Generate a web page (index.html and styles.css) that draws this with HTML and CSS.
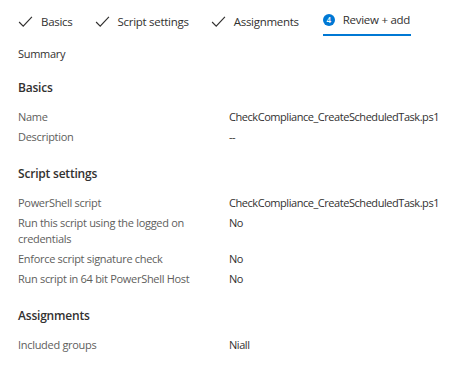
FILE: index.html
```html
<!DOCTYPE html>
<html lang="en">
<head>
  <meta charset="UTF-8" />
  <title>Review + add</title>
  <link rel="stylesheet" href="styles.css">
</head>
<body>
  <div class="wizard">
    <!-- Steps -->
    <div class="steps">
      <div class="step done">
        <svg class="check" viewBox="0 0 16 12" width="15" height="11"><path d="M1 6.5 L5.5 11 L15 1" fill="none" stroke="#323130" stroke-width="1.3"/></svg>
        <span>Basics</span>
      </div>
      <div class="step done">
        <svg class="check" viewBox="0 0 16 12" width="15" height="11"><path d="M1 6.5 L5.5 11 L15 1" fill="none" stroke="#323130" stroke-width="1.3"/></svg>
        <span>Script settings</span>
      </div>
      <div class="step done">
        <svg class="check" viewBox="0 0 16 12" width="15" height="11"><path d="M1 6.5 L5.5 11 L15 1" fill="none" stroke="#323130" stroke-width="1.3"/></svg>
        <span>Assignments</span>
      </div>
      <div class="step active">
        <span class="num">4</span>
        <span>Review + add</span>
      </div>
    </div>

    <div class="summary">Summary</div>

    <!-- Basics -->
    <h3>Basics</h3>
    <div class="row"><div class="label">Name</div><div class="value">CheckCompliance_CreateScheduledTask.ps1</div></div>
    <div class="row"><div class="label">Description</div><div class="value">--</div></div>

    <!-- Script settings -->
    <h3>Script settings</h3>
    <div class="row"><div class="label">PowerShell script</div><div class="value">CheckCompliance_CreateScheduledTask.ps1</div></div>
    <div class="row"><div class="label">Run this script using the logged on credentials</div><div class="value">No</div></div>
    <div class="row"><div class="label">Enforce script signature check</div><div class="value">No</div></div>
    <div class="row"><div class="label">Run script in 64 bit PowerShell Host</div><div class="value">No</div></div>

    <!-- Assignments -->
    <h3>Assignments</h3>
    <div class="row"><div class="label">Included groups</div><div class="value">Niall</div></div>
  </div>
</body>
</html>
```

FILE: styles.css
```css
body {
  margin: 0;
  background: #ffffff;
  font-family: 'Open Sans', sans-serif;
  font-size: 11px;
  letter-spacing: -0.3px;
  color: #323130;
}
.wizard {
  padding: 0 0 0 18px;
}
.steps {
  display: flex;
  height: 36px;
  gap: 22px;
}
.step {
  display: flex;
  align-items: center;
  gap: 8px;
  font-size: 11.5px;
  letter-spacing: -0.28px;
  box-sizing: border-box;
  padding-top: 7px;
}
.step.active {
  border-bottom: 2px solid #0078d4;
  padding: 5px 1px 0 0;
  margin-left: 2px;
}
.check {
  display: block;
}
.num {
  width: 12px;
  height: 12px;
  border-radius: 50%;
  background: #0078d4;
  color: #fff;
  font-size: 8px;
  font-weight: 600;
  letter-spacing: 0;
  display: flex;
  align-items: center;
  justify-content: center;
}
.summary {
  margin-top: 10px;
  line-height: 16px;
  color: #323130;
}
h3 {
  margin: 19px 0 11px;
  font-size: 12px;
  font-weight: 600;
  letter-spacing: -0.2px;
  line-height: 16px;
}
.summary + h3 {
  margin-top: 18px;
}
.row {
  display: flex;
  padding: 2px 0;
  line-height: 16px;
}
.label {
  width: 180px;
  margin-right: 31px;
  color: #605e5c;
}
.value {
  color: #323130;
  letter-spacing: -0.45px;
}
```
